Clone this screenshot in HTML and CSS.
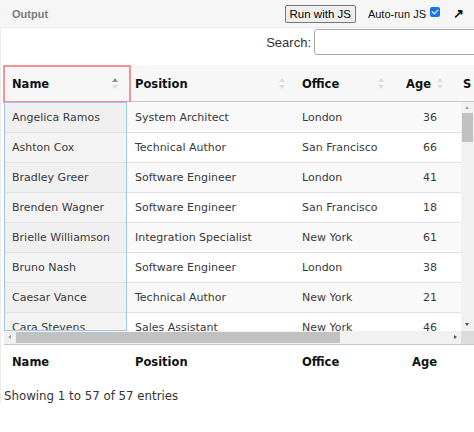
FILE: index.html
```html
<!DOCTYPE html>
<html lang="en">

<head>
  <meta charset="UTF-8">
  <title>Output</title>
  <link rel="stylesheet" href="styles.css">
</head>

<body>
  <div class="top-bar">
    <span class="top-title">Output</span>
    <div class="top-actions">
      <button class="run-btn">Run with JS</button>
      <label class="auto-run">Auto-run JS <span class="check"></span></label>
      <span class="pop-out">&#8599;</span>
    </div>
  </div>

  <div class="output">
    <div class="search-row">
      <label class="search-label">Search:</label>
      <span class="search-input"></span>
    </div>

    <div class="table-area">
      <div class="scroll-head">
        <table class="dt">
          <colgroup>
            <col class="c-name"><col class="c-pos"><col class="c-office"><col class="c-age"><col class="c-date">
          </colgroup>
          <tr>
            <th>Name<span class="sort asc"></span></th>
            <th>Position<span class="sort"></span></th>
            <th>Office<span class="sort"></span></th>
            <th class="num">Age<span class="sort"></span></th>
            <th>S</th>
          </tr>
        </table>
      </div>
      <div class="head-focus"></div>

      <div class="scroll-body">
        <div class="body-view">
          <table class="dt">
            <colgroup>
              <col class="c-name"><col class="c-pos"><col class="c-office"><col class="c-age"><col class="c-date">
            </colgroup>
            <tr><td>Angelica Ramos</td><td>System Architect</td><td>London</td><td class="num">36</td><td></td></tr>
            <tr><td>Ashton Cox</td><td>Technical Author</td><td>San Francisco</td><td class="num">66</td><td></td></tr>
            <tr><td>Bradley Greer</td><td>Software Engineer</td><td>London</td><td class="num">41</td><td></td></tr>
            <tr><td>Brenden Wagner</td><td>Software Engineer</td><td>San Francisco</td><td class="num">18</td><td></td></tr>
            <tr><td>Brielle Williamson</td><td>Integration Specialist</td><td>New York</td><td class="num">61</td><td></td></tr>
            <tr><td>Bruno Nash</td><td>Software Engineer</td><td>London</td><td class="num">38</td><td></td></tr>
            <tr><td>Caesar Vance</td><td>Technical Author</td><td>New York</td><td class="num">21</td><td></td></tr>
            <tr><td>Cara Stevens</td><td>Sales Assistant</td><td>New York</td><td class="num">46</td><td></td></tr>
          </table>
          <div class="col-focus"></div>
        </div>
        <div class="vbar">
          <span class="arrow up"></span>
          <span class="vthumb"></span>
          <span class="arrow down"></span>
        </div>
      </div>

      <div class="hbar-row">
        <div class="hbar">
          <span class="arrow left"></span>
          <span class="hthumb"></span>
          <span class="arrow right"></span>
        </div>
        <span class="corner"></span>
      </div>

      <div class="scroll-foot">
        <table class="dt">
          <colgroup>
            <col class="c-name"><col class="c-pos"><col class="c-office"><col class="c-age"><col class="c-date">
          </colgroup>
          <tr>
            <th>Name</th>
            <th>Position</th>
            <th>Office</th>
            <th class="num">Age</th>
            <th></th>
          </tr>
        </table>
      </div>
    </div>

    <div class="info">Showing 1 to 57 of 57 entries</div>
  </div>
</body>

</html>
```

FILE: styles.css
```css
html, body {
  margin: 0;
  background: #ffffff;
  overflow: hidden;
}
body {
  font-family: "DejaVu Sans", Verdana, sans-serif;
  color: #333333;
}
.top-bar {
  height: 28px;
  display: flex;
  align-items: center;
  justify-content: space-between;
  padding: 0 8px 0 12px;
  background-color: #f6f6f6;
  border-bottom: 1px solid #ececec;
  box-sizing: border-box;
  font-family: "Liberation Sans", Arial, sans-serif;
}
.top-title {
  font-size: 11px;
  font-weight: bold;
  color: #7a7a7a;
}
.top-actions {
  display: flex;
  align-items: center;
}
.run-btn {
  font-family: "Liberation Sans", Arial, sans-serif;
  font-size: 11.5px;
  padding: 1px 4px;
  height: 18px;
  line-height: 14px;
  color: #000000;
  background-color: #efefef;
  border: 1px solid #767676;
  border-radius: 2px;
}
.auto-run {
  display: flex;
  align-items: center;
  margin-left: 12px;
  font-size: 11px;
  color: #111111;
}
.check {
  position: relative;
  display: inline-block;
  width: 10px;
  height: 10px;
  margin-left: 4px;
  margin-top: -3px;
  background-color: #1a73e8;
  border-radius: 2px;
}
.check::after {
  content: "";
  position: absolute;
  left: 3px;
  top: 1px;
  width: 3px;
  height: 5px;
  border: solid #ffffff;
  border-width: 0 1.5px 1.5px 0;
  transform: rotate(45deg);
}
.pop-out {
  margin-left: 13px;
  margin-right: 2px;
  font-size: 13px;
  font-weight: bold;
  color: #111111;
}
.output {
  padding-left: 3px;
  border-left: 1px solid #ececec;
}
.search-row {
  height: 28px;
  display: flex;
  justify-content: flex-end;
  align-items: center;
  overflow: hidden;
}
.search-label {
  font-family: "Liberation Sans", Arial, sans-serif;
  font-size: 13px;
  color: #333333;
  margin-right: 3px;
}
.search-input {
  flex: none;
  width: 180px;
  height: 26px;
  margin-right: -20px;
  border: 1px solid #aaaaaa;
  border-radius: 3px;
  box-sizing: border-box;
}
.table-area {
  position: relative;
  margin-top: 9px;
}
.dt {
  border-collapse: separate;
  border-spacing: 0;
  table-layout: fixed;
  width: 551px;
  font-size: 11.5px;
}
.c-name { width: 123px; }
.c-pos { width: 167px; }
.c-office { width: 99px; }
.c-age { width: 62px; }
.c-date { width: 100px; }
.dt th, .dt td {
  text-align: left;
  white-space: nowrap;
  overflow: hidden;
  padding: 0 8px;
}
.dt .num {
  text-align: right;
  padding-right: 18px;
}
.dt th {
  position: relative;
  font-weight: bold;
  color: #111111;
}
.scroll-head {
  overflow: hidden;
}
.scroll-head .dt th {
  height: 37px;
  padding-top: 2px;
  background-color: #f7f7f7;
  border-bottom: 1px solid #c6c6c6;
  box-sizing: border-box;
}
.scroll-head .dt th.num {
  padding-right: 24px;
}
.head-focus {
  position: absolute;
  left: -1px;
  top: 0;
  width: 128px;
  height: 38px;
  border: 2px solid #f29494;
  box-sizing: border-box;
}
.sort {
  position: absolute;
  top: 13px;
  right: 9px;
  width: 6px;
  height: 11px;
}
.scroll-head .num .sort {
  right: 12px;
}
.sort::before, .sort::after {
  content: "";
  position: absolute;
  left: 0;
  border-left: 3px solid transparent;
  border-right: 3px solid transparent;
}
.sort::before {
  top: 0;
  border-bottom: 4px solid #dcdcdc;
}
.sort::after {
  bottom: 0;
  border-top: 4px solid #dcdcdc;
}
.sort.asc::before {
  border-bottom-color: #8e8e8e;
}
.scroll-body {
  display: flex;
  height: 229px;
}
.body-view {
  position: relative;
  flex: 1;
  overflow: hidden;
}
.body-view .dt {
  font-size: 11px;
}
.body-view .dt td {
  height: 30px;
  border-top: 1px solid #e2e2e2;
  box-sizing: border-box;
  color: #3a3a3a;
}
.body-view .dt tr:first-child td {
  border-top: none;
}
.body-view .dt tr:nth-child(odd) td {
  background-color: #f9f9f9;
}
.body-view .dt td:first-child {
  background-color: #f3f3f3;
}
.body-view .dt tr:nth-child(odd) td:first-child {
  background-color: #f0f0f0;
}
.col-focus {
  position: absolute;
  left: 0;
  top: 0;
  width: 123px;
  height: 229px;
  border: 1px solid #9fc6ea;
  box-sizing: border-box;
}
.vbar {
  position: relative;
  width: 13px;
  background-color: #f1f1f1;
}
.vthumb {
  position: absolute;
  left: 1px;
  right: 1px;
  top: 11px;
  height: 29px;
  background-color: #c1c1c1;
}
.arrow {
  position: absolute;
  width: 0;
  height: 0;
}
.arrow.up {
  left: 4px;
  top: 4px;
  border-left: 2.5px solid transparent;
  border-right: 2.5px solid transparent;
  border-bottom: 3px solid #a3a3a3;
}
.arrow.down {
  left: 4px;
  bottom: 5px;
  border-left: 2.5px solid transparent;
  border-right: 2.5px solid transparent;
  border-top: 3px solid #505050;
}
.hbar-row {
  display: flex;
  height: 13px;
}
.hbar {
  position: relative;
  flex: 1;
  background-color: #f1f1f1;
}
.hthumb {
  position: absolute;
  left: 12px;
  width: 324px;
  top: 1px;
  bottom: 1px;
  background-color: #c1c1c1;
}
.arrow.left {
  left: 4px;
  top: 4px;
  border-top: 2.5px solid transparent;
  border-bottom: 2.5px solid transparent;
  border-right: 3px solid #a3a3a3;
}
.arrow.right {
  right: 4px;
  top: 4px;
  border-top: 2.5px solid transparent;
  border-bottom: 2.5px solid transparent;
  border-left: 3px solid #505050;
}
.corner {
  width: 13px;
  background-color: #dcdcdc;
}
.scroll-foot {
  overflow: hidden;
  border-top: 1px solid #c6c6c6;
}
.scroll-foot .dt th {
  height: 33px;
}
.info {
  padding-top: 11px;
  font-size: 11.8px;
  color: #333333;
}
```
